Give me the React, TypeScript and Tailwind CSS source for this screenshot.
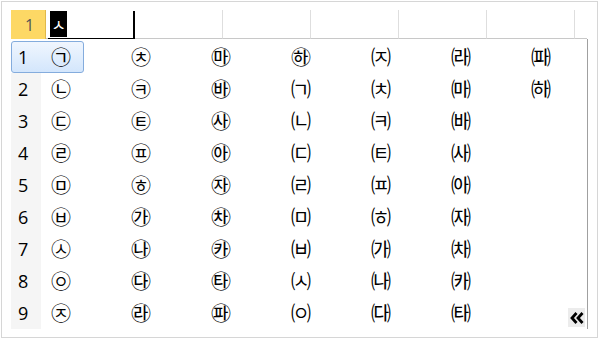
const cols: string[][] = [
  ["㉠", "㉡", "㉢", "㉣", "㉤", "㉥", "㉦", "㉧", "㉨"],
  ["㉩", "㉪", "㉫", "㉬", "㉭", "㉮", "㉯", "㉰", "㉱"],
  ["㉲", "㉳", "㉴", "㉵", "㉶", "㉷", "㉸", "㉹", "㉺"],
  ["㉻", "㈀", "㈁", "㈂", "㈃", "㈄", "㈅", "㈆", "㈇"],
  ["㈈", "㈉", "㈊", "㈋", "㈌", "㈍", "㈎", "㈏", "㈐"],
  ["㈑", "㈒", "㈓", "㈔", "㈕", "㈖", "㈗", "㈘", "㈙"],
  ["㈚", "㈛", "", "", "", "", "", "", ""],
];

const cjk = { fontFamily: '"Noto Sans CJK KR", sans-serif' };
const num = { fontFamily: '"Open Sans", "Liberation Sans", sans-serif' };

function CollapseButton() {
  return (
    <div className="ml-auto mr-[2px] mb-[2px] self-end flex h-[19px] w-[17px] items-center justify-center bg-[#ececec]">
      <svg width="14" height="12" viewBox="0 0 14 12" fill="none" stroke="#000" strokeWidth="2.8">
        <polyline points="6.5,1 2,6 6.5,11" />
        <polyline points="12.5,1 8,6 12.5,11" />
      </svg>
    </div>
  );
}

function CandidateRow({ index }: { index: number }) {
  const selected = index === 0;
  return (
    <div className="relative flex h-[32px] items-center">
      {selected && (
        <div className="absolute left-0 top-0 h-full w-[73px] rounded-[3px] border border-[#84acdd] bg-gradient-to-b from-[#f0f6fe] to-[#d3e6fc]" />
      )}
      <div
        className={`relative flex h-full w-[30px] items-center pl-[7px] text-[18px] text-black ${selected ? "" : "bg-[#f5f5f5]"}`}
        style={num}
      >
        {index + 1}
      </div>
      {cols.map((c, i) => (
        <div
          key={i}
          className={`relative flex h-full items-center pl-[10px] text-[20px] leading-none text-black ${i === 6 ? "flex-1" : "w-[80px]"}`}
          style={cjk}
        >
          {c[index]}
          {i === 6 && index === 8 && <CollapseButton />}
        </div>
      ))}
    </div>
  );
}

export default function App() {
  return (
    <div className="h-[339px] w-[599px] bg-white p-px">
      <div className="h-full border border-[#d6d6d6] pl-[9px] pt-[8px] pr-[10px]">
        {/* cell row with composition */}
        <div className="flex h-[29px] w-[576px]">
          <div
            className="flex h-full w-[35px] items-center justify-center border-r border-[#e0b84a] bg-[#fdd865] pl-[3px] text-[16px] text-[#555]"
            style={num}
          >
            1
          </div>
          <div className="flex w-[176px] border-b border-[#c8c8c8] pl-[2px]">
            <div className="-mb-px flex w-[87px] items-start border-b border-black">
              <div
                className="ml-[2px] mt-px flex h-[26px] w-[17px] items-center justify-center bg-black text-[16px] text-white"
                style={cjk}
              >
                ㅅ
              </div>
              <div className="ml-auto mt-px h-[27px] w-[2px] bg-black" />
            </div>
          </div>
          <div className="w-[88px] border-b border-l border-[#c8c8c8] border-l-[#dedede]" />
          <div className="w-[88px] border-b border-l border-[#c8c8c8] border-l-[#dedede]" />
          <div className="w-[88px] border-b border-l border-[#c8c8c8] border-l-[#dedede]" />
          <div className="w-[88px] border-b border-l border-[#c8c8c8] border-l-[#dedede]" />
          <div className="flex-1 border-b border-l border-[#c8c8c8] border-l-[#dedede]" />
        </div>
        {/* candidate window */}
        <div className="w-[577px] border-r border-[#a0a0a0] pt-[2px]">
          {Array.from({ length: 9 }, (_, i) => (
            <CandidateRow key={i} index={i} />
          ))}
        </div>
      </div>
    </div>
  );
}
